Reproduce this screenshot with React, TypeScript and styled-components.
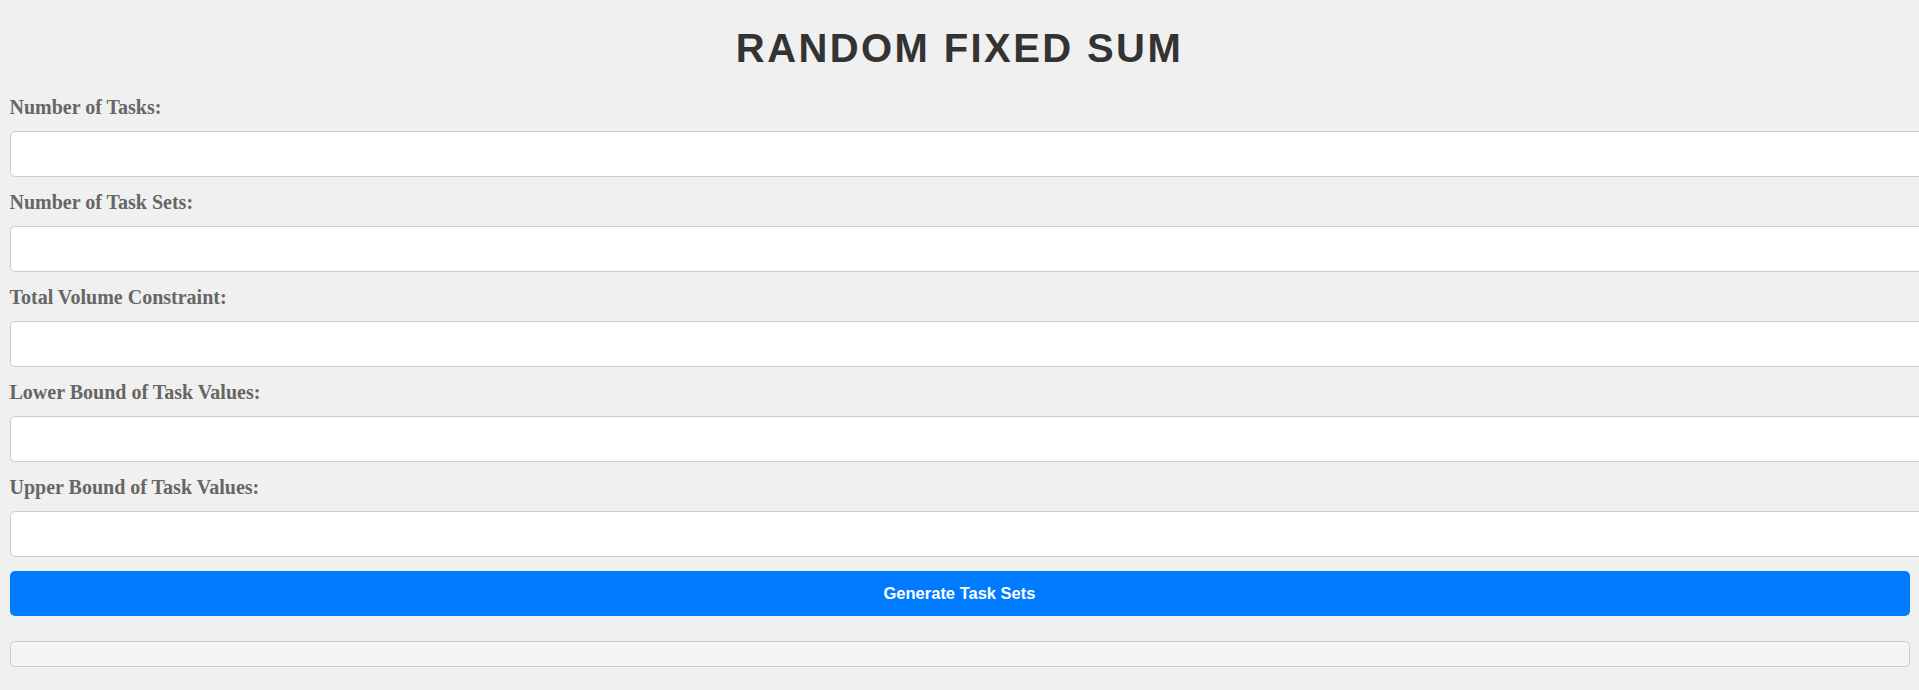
import React from "react";
import styled, { createGlobalStyle } from "styled-components";

const GlobalStyle = createGlobalStyle`
  html, body {
    margin: 0;
    padding: 0;
    background: #f0f0f0;
    overflow: hidden;
  }
  body {
    font-family: "Liberation Serif", "Times New Roman", serif;
  }
`;

const Container = styled.div`
  max-width: 1900px;
  margin: 0 auto;
  display: flex;
  flex-direction: column;
`;

const Title = styled.h1`
  margin: 25px 0;
  font-family: "Liberation Sans", Arial, sans-serif;
  font-size: 40px;
  line-height: 46px;
  font-weight: 700;
  letter-spacing: 2.4px;
  color: #333;
  text-align: center;
`;

const Field = styled.div`
  display: flex;
  flex-direction: column;
  margin-bottom: 14px;
`;

const Label = styled.label`
  font-family: "Liberation Serif", "Times New Roman", serif;
  font-size: 20px;
  line-height: 22px;
  font-weight: 700;
  color: #666;
  margin-bottom: 13px;
`;

const Input = styled.input`
  box-sizing: content-box;
  width: 100%;
  height: 20px;
  padding: 12px;
  border: 1px solid #ccc;
  border-radius: 5px;
  background: #fff;
  font-size: 16px;
  outline: none;
`;

const Button = styled.button`
  height: 45px;
  border: none;
  border-radius: 5px;
  background: #007bff;
  color: #fff;
  font-family: "Liberation Sans", Arial, sans-serif;
  font-size: 16.5px;
  font-weight: 700;
  cursor: pointer;
  padding: 0;
`;

const Result = styled.div`
  margin-top: 25px;
  padding: 12px;
  border: 1px solid #ccc;
  border-radius: 5px;
  background: #f4f4f4;
`;

const fields = [
  "Number of Tasks:",
  "Number of Task Sets:",
  "Total Volume Constraint:",
  "Lower Bound of Task Values:",
  "Upper Bound of Task Values:",
];

export default function App() {
  return (
    <>
      <GlobalStyle />
      <Container>
        <Title>RANDOM FIXED SUM</Title>
        {fields.map((f, i) => (
          <Field key={f}>
            <Label htmlFor={`f${i}`}>{f}</Label>
            <Input id={`f${i}`} type="number" />
          </Field>
        ))}
        <Button>Generate Task Sets</Button>
        <Result />
      </Container>
    </>
  );
}
